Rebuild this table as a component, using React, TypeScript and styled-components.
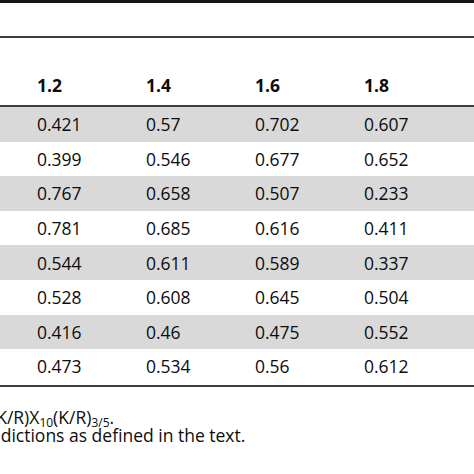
import React from 'react'
import styled, { createGlobalStyle } from 'styled-components'

const GlobalStyle = createGlobalStyle`
  html, body {
    margin: 0;
    padding: 0;
    background: #ffffff;
  }
  body {
    font-family: 'Open Sans', 'DejaVu Sans', sans-serif;
    color: #0d0d0d;
    overflow: hidden;
  }
`

const Page = styled.div`
  width: 474px;
  height: 474px;
  overflow: hidden;
  background: #ffffff;
`

const TopRule = styled.div`
  height: 3px;
  background: #151515;
`

const SpanHeader = styled.div`
  height: 33px;
  border-bottom: 2px solid #3e3e3e;
`

const Grid = styled.div<{ $shaded?: boolean }>`
  display: grid;
  grid-template-columns: 109px 109px 109px 1fr;
  padding-left: 37px;
  background: ${(p) => (p.$shaded ? '#d9d9d9' : '#ffffff')};
`

const HeaderRow = styled(Grid)`
  height: 69px;
  box-sizing: border-box;
  padding-top: 36.5px;
  border-bottom: 2px solid #3e3e3e;
  font-weight: 700;
  font-size: 17.5px;
  line-height: 20px;
`

const Body = styled.div`
  padding-bottom: 1.5px;
  border-bottom: 2px solid #3e3e3e;
`

const Row = styled(Grid)`
  height: 34.6px;
  align-items: center;
  font-size: 17.5px;
  line-height: 20px;
`

const Cell = styled.div`
  white-space: nowrap;
`

const Notes = styled.div`
  padding-top: 22px;
  font-size: 17.5px;
  line-height: 17.6px;
  white-space: nowrap;
  overflow: hidden;
`

const NoteLine = styled.div<{ $shift: number }>`
  margin-left: ${(p) => -p.$shift}px;

  sub {
    font-size: 12px;
    line-height: 0;
    vertical-align: -3px;
  }
`

const header = ['1.2', '1.4', '1.6', '1.8']

const rows = [
  ['0.421', '0.57', '0.702', '0.607'],
  ['0.399', '0.546', '0.677', '0.652'],
  ['0.767', '0.658', '0.507', '0.233'],
  ['0.781', '0.685', '0.616', '0.411'],
  ['0.544', '0.611', '0.589', '0.337'],
  ['0.528', '0.608', '0.645', '0.504'],
  ['0.416', '0.46', '0.475', '0.552'],
  ['0.473', '0.534', '0.56', '0.612'],
]

const App = () => (
  <>
    <GlobalStyle />
    <Page>
      <TopRule />
      <SpanHeader />
      <HeaderRow>
        {header.map((h) => (
          <Cell key={h}>{h}</Cell>
        ))}
      </HeaderRow>
      <Body>
        {rows.map((r, i) => (
          <Row key={i} $shaded={i % 2 === 0}>
            {r.map((v, j) => (
              <Cell key={j}>{v}</Cell>
            ))}
          </Row>
        ))}
      </Body>
      <Notes>
        <NoteLine $shift={9}>
          (K/R)X<sub>10</sub>(K/R)<sub>3/5</sub>.
        </NoteLine>
        <NoteLine $shift={27}>predictions as defined in the text.</NoteLine>
      </Notes>
    </Page>
  </>
)

export default App
